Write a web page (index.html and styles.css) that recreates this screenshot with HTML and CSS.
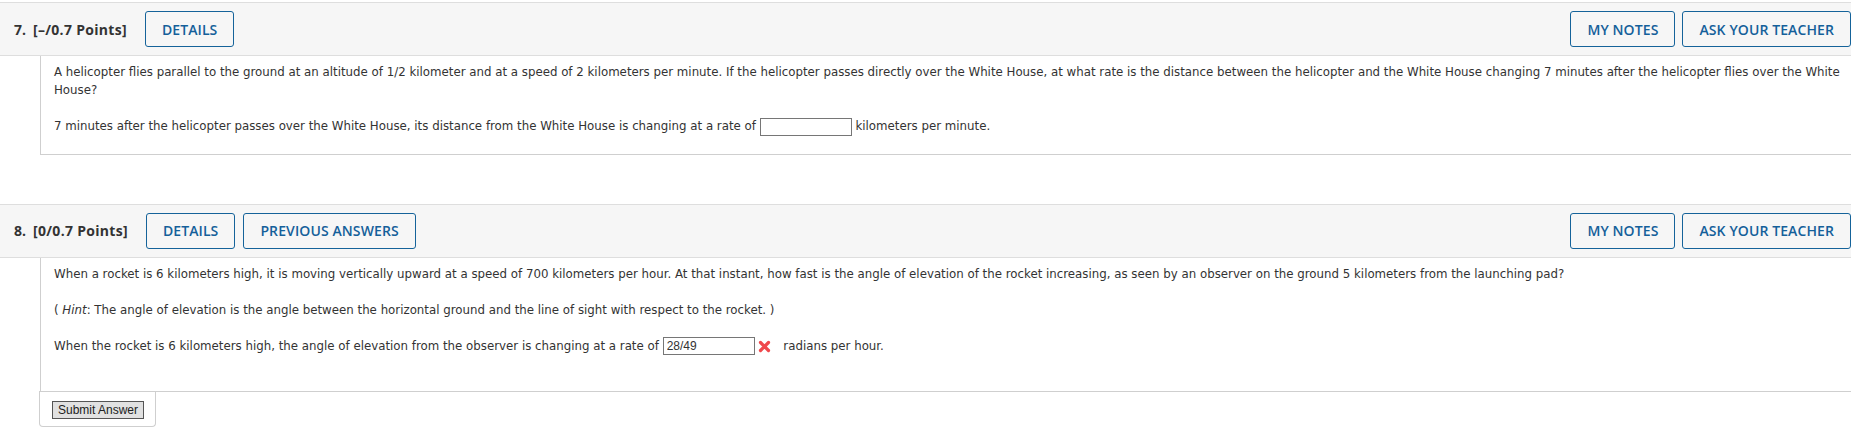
FILE: index.html
```html
<!DOCTYPE html>
<html>
<head>
<meta charset="utf-8">
<link rel="stylesheet" href="styles.css">
</head>
<body>
<div class="question q7">
  <div class="q-header">
    <span class="qnum">7.</span>
    <span class="points">[–/0.7 Points]</span>
    <div class="left-btns">
      <button class="btn">DETAILS</button>
    </div>
    <div class="right-btns">
      <button class="btn">MY NOTES</button>
      <button class="btn">ASK YOUR TEACHER</button>
    </div>
  </div>
  <div class="q-body">
    <p>A helicopter flies parallel to the ground at an altitude of 1/2 kilometer and at a speed of 2 kilometers per minute. If the helicopter passes directly over the White House, at what rate is the distance between the helicopter and the White House changing 7 minutes after the helicopter flies over the White House?</p>
    <p>7 minutes after the helicopter passes over the White House, its distance from the White House is changing at a rate of <input class="answer" type="text" value=""> kilometers per minute.</p>
  </div>
</div>

<div class="question q8">
  <div class="q-header">
    <span class="qnum">8.</span>
    <span class="points">[0/0.7 Points]</span>
    <div class="left-btns">
      <button class="btn">DETAILS</button>
      <button class="btn">PREVIOUS ANSWERS</button>
    </div>
    <div class="right-btns">
      <button class="btn">MY NOTES</button>
      <button class="btn">ASK YOUR TEACHER</button>
    </div>
  </div>
  <div class="q-body with-submit">
    <p>When a rocket is 6 kilometers high, it is moving vertically upward at a speed of 700 kilometers per hour. At that instant, how fast is the angle of elevation of the rocket increasing, as seen by an observer on the ground 5 kilometers from the launching pad?</p>
    <p>( <i>Hint</i>: The angle of elevation is the angle between the horizontal ground and the line of sight with respect to the rocket. )</p>
    <p>When the rocket is 6 kilometers high, the angle of elevation from the observer is changing at a rate of <input class="answer" type="text" value="28/49"><svg class="wrong" width="13" height="13" viewBox="0 0 13 13"><path d="M2.5 2.5 L10.5 10.5 M10.5 2.5 L2.5 10.5" stroke="#f0484c" stroke-width="3.2" stroke-linecap="round"/></svg> radians per hour.</p>
  </div>
  <div class="submit-box">
    <button class="submit">Submit Answer</button>
  </div>
</div>
</body>
</html>
```

FILE: styles.css
```css
body {
  margin: 0;
  background: #fff;
  font-family: "DejaVu Sans", Verdana, sans-serif;
  color: #333;
}

.question.q7 {
  margin-top: 2px;
}

.question.q8 {
  margin-top: 49px;
}

.q-header {
  display: flex;
  align-items: center;
  height: 52px;
  background: #f6f6f6;
  border-top: 1px solid #dedede;
  border-bottom: 1px solid #dedede;
  padding-left: 14px;
  font-family: "Open Sans", sans-serif;
  font-weight: 700;
  font-size: 14px;
  color: #333;
}

.qnum {
  margin-right: 7px;
}

.points {
  letter-spacing: 0.3px;
}

.left-btns {
  display: flex;
  gap: 8px;
  margin-left: 18px;
}

.right-btns {
  display: flex;
  gap: 7px;
  margin-left: auto;
}

.btn {
  height: 36px;
  padding: 0 16px;
  background: #f6f6f6;
  border: 1px solid #15639a;
  border-radius: 3px;
  font-family: "Open Sans", sans-serif;
  font-weight: 600;
  font-size: 14px;
  color: #14609a;
  letter-spacing: 0.1px;
}

.q-body {
  margin-left: 40px;
  border-left: 1px solid #cfcfcf;
  border-bottom: 1px solid #cfcfcf;
  padding: 7px 10px 18px 13px;
  font-size: 11.8px;
  line-height: 18px;
}

.q-body p {
  margin: 0 0 18px 0;
}

.q-body p:last-child {
  margin-bottom: 0;
}

.q-body.with-submit {
  padding-bottom: 36px;
}

.answer {
  box-sizing: border-box;
  width: 92px;
  height: 18px;
  margin: 0;
  padding: 0 3px;
  border: 1px solid #767676;
  font-family: "Liberation Sans", Arial, sans-serif;
  font-size: 12px;
  color: #333;
  vertical-align: middle;
}

.wrong {
  vertical-align: middle;
  margin-left: 3px;
  margin-right: 9px;
}

.submit-box {
  width: 103px;
  margin-left: 39px;
  margin-top: -1px;
  border: 1px solid #cfcfcf;
  border-top: none;
  border-radius: 0 0 4px 4px;
  padding: 10px 0 7px 12px;
}

.submit {
  display: block;
  box-sizing: border-box;
  width: 92px;
  height: 18px;
  padding: 0;
  background: #e1e1e1;
  border: 1px solid #555;
  font-family: "Liberation Sans", Arial, sans-serif;
  font-size: 12px;
  color: #222;
}
```
